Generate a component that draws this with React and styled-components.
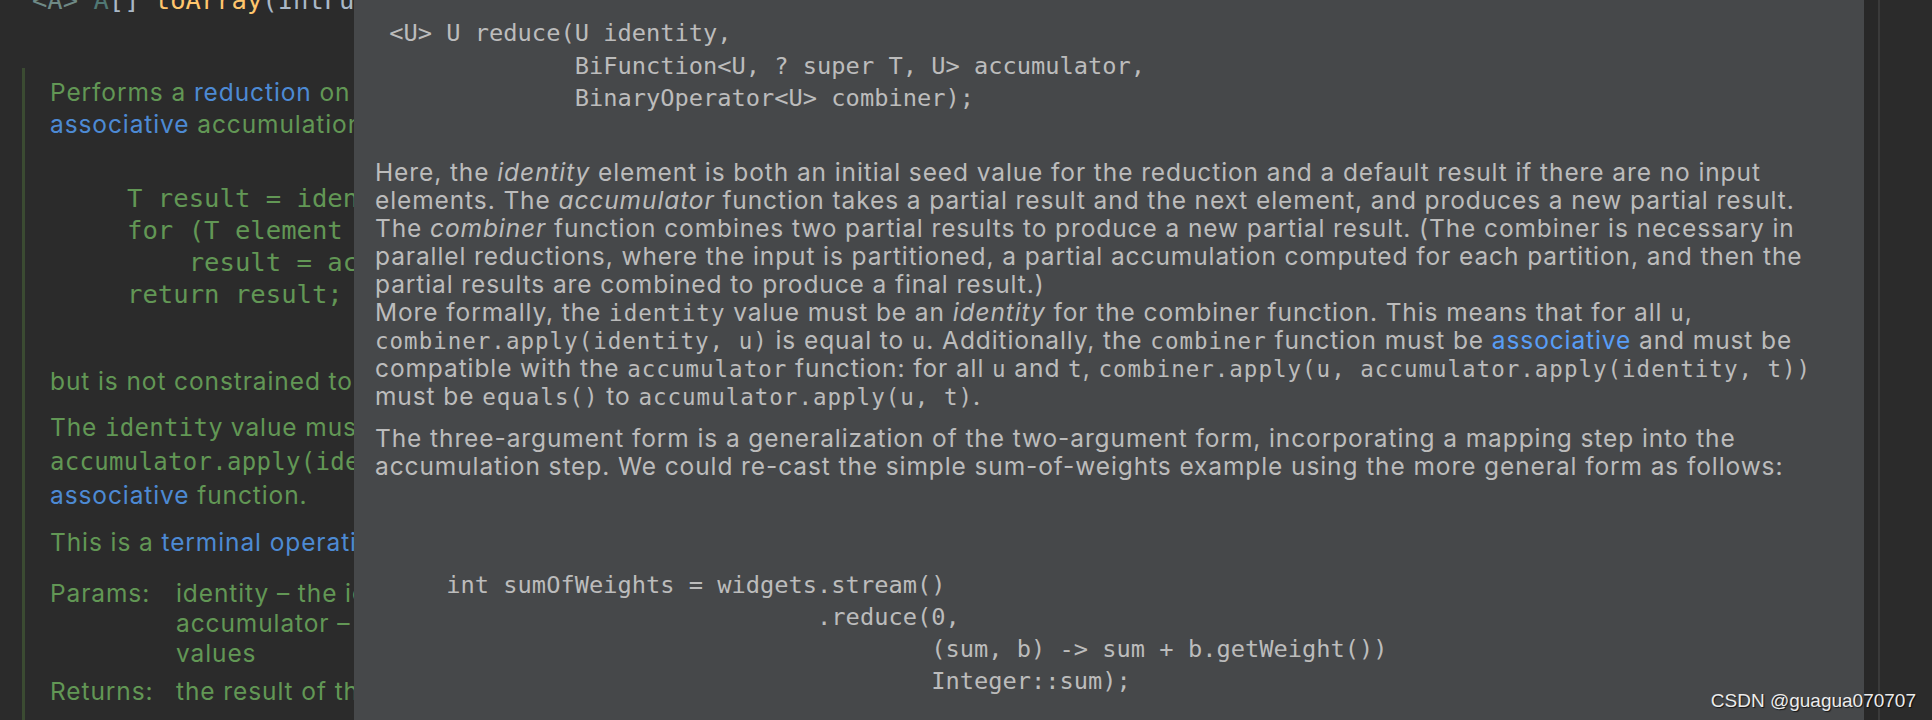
import React from "react";
import styled, { createGlobalStyle } from "styled-components";

const GlobalStyle = createGlobalStyle`
  html, body {
    margin: 0;
    padding: 0;
    background: #2b2b2b;
  }
  body {
    overflow: hidden;
  }
`;

const MONO = `"DejaVu Sans Mono", "Liberation Mono", monospace`;
const SANS = `Inter, "Noto Sans", sans-serif`;

const Screen = styled.div`
  position: relative;
  display: flex;
  width: 1932px;
  height: 720px;
  overflow: hidden;
  background: #2b2b2b;
`;

const EditorArea = styled.div`
  flex: 1;
  min-width: 0;
  display: flex;
  flex-direction: column;
  overflow: hidden;
`;

const ScrollStrip = styled.div`
  width: 14px;
  background: #282828;
`;

const Divider = styled.div`
  width: 2px;
  background: #3a3a3a;
`;

const RightGutter = styled.div`
  width: 52px;
  background: #2b2b2b;
`;

const SourceLine = styled.div`
  margin-top: -16px;
  padding-left: 32px;
  font-family: ${MONO};
  font-size: 25.5px;
  line-height: 32px;
  white-space: pre;
  color: #a9b7c6;
`;

const Tok = styled.span`
  color: ${(p) => p.$c};
`;

const DocBlock = styled.div`
  margin: 52px 0 0 22px;
  padding: 8px 0 0 25px;
  border-left: 3px solid #3b4b32;
  color: #629755;
  font-family: ${SANS};
  font-size: 24.5px;
  letter-spacing: 0.9px;
  line-height: 32px;
  white-space: nowrap;
  flex: 1;
`;

const DocPara = styled.div`
  margin-top: ${(p) => p.$gap || 0}px;
  line-height: ${(p) => p.$lh || 32}px;
`;

const DocPre = styled.div`
  margin-top: ${(p) => p.$gap || 0}px;
  font-family: ${MONO};
  font-size: 25.6px;
  letter-spacing: 0;
  line-height: 32px;
  white-space: pre;
`;

const DocCode = styled.span`
  font-family: ${MONO};
  font-size: 24px;
  letter-spacing: 0.3px;
  line-height: 20px;
`;

const DocLink = styled.span`
  color: #4d8ad4;
`;

const ParamGrid = styled.div`
  margin-top: ${(p) => p.$gap || 0}px;
  display: grid;
  grid-template-columns: 126px auto;
  line-height: ${(p) => p.$lh || 32}px;
`;

const Popup = styled.div`
  position: absolute;
  left: 354px;
  top: 0;
  bottom: 0;
  width: 1510px;
  box-sizing: border-box;
  padding: 17px 0 0 21px;
  background: #46484a;
  color: #bcbcbc;
  overflow: hidden;
`;

const PopupPre = styled.div`
  margin-top: ${(p) => p.$gap || 0}px;
  font-family: ${MONO};
  font-size: 23.7px;
  line-height: ${(p) => p.$lh || 32}px;
  white-space: pre;
`;

const PopupPara = styled.div`
  margin-top: ${(p) => p.$gap || 0}px;
  font-family: ${SANS};
  font-size: 24.5px;
  letter-spacing: 0.9px;
  line-height: 28.1px;
  white-space: nowrap;
`;

const Code = styled.span`
  font-family: ${MONO};
  font-size: 22.5px;
  letter-spacing: 1px;
  line-height: 20px;
`;

const Link = styled.span`
  color: #589df6;
`;

const Watermark = styled.div`
  position: absolute;
  right: 16px;
  bottom: 8px;
  font-family: "Liberation Sans", Arial, sans-serif;
  font-size: 19px;
  line-height: 22px;
  color: #ececec;
  text-shadow: 1px 1px 1px rgba(0, 0, 0, 0.7);
`;

export default function App() {
  return (
    <>
      <GlobalStyle />
      <Screen>
        <EditorArea>
          <SourceLine>
            <Tok $c="#6f8a86">{"<A>"}</Tok>{" "}
            <Tok $c="#507874">A</Tok>
            <Tok $c="#a9b7c6">[]</Tok>{" "}
            <Tok $c="#ffc66d">toArray</Tok>
            <Tok $c="#a9b7c6">(IntFunction&lt;A[]&gt; generator);</Tok>
          </SourceLine>

          <DocBlock>
            <DocPara>
              Performs a <DocLink>reduction</DocLink> on the elements of this stream, using the
              provided identity value and an
              <br />
              <DocLink>associative</DocLink> accumulation function, and returns the reduced value.
              This is equivalent to:
            </DocPara>
            <DocPre $gap={42}>
              {"     T result = identity;\n     for (T element : this stream)\n         result = accumulator.apply(result, element)\n     return result;"}
            </DocPre>
            <DocPara $gap={55}>but is not constrained to execute sequentially.</DocPara>
            <DocPara $gap={13} $lh={34}>
              The <DocCode>identity</DocCode> value must be an identity for the accumulator
              function. This means that for all t,
              <br />
              <DocCode>accumulator.apply(identity, t)</DocCode> is equal to t. The accumulator
              function must be an
              <br />
              <DocLink>associative</DocLink> function.
            </DocPara>
            <DocPara $gap={14}>
              This is a <DocLink>terminal operation</DocLink>.
            </DocPara>
            <ParamGrid $gap={20} $lh={30}>
              <span>Params:</span>
              <span>
                identity – the identity value for the accumulating function
                <br />
                accumulator – an associative, non-interfering, stateless function for combining two
                <br />
                values
              </span>
            </ParamGrid>
            <ParamGrid $gap={7}>
              <span>Returns:</span>
              <span>the result of the reduction</span>
            </ParamGrid>
          </DocBlock>
        </EditorArea>
        <ScrollStrip />
        <Divider />
        <RightGutter />

        <Popup>
          <PopupPre $lh={32.5}>
            {" <U> U reduce(U identity,\n              BiFunction<U, ? super T, U> accumulator,\n              BinaryOperator<U> combiner);"}
          </PopupPre>

          <PopupPara $gap={43}>
            Here, the <i>identity</i> element is both an initial seed value for the reduction and a
            default result if there are no input
            <br />
            elements. The <i>accumulator</i> function takes a partial result and the next element,
            and produces a new partial result.
            <br />
            The <i>combiner</i> function combines two partial results to produce a new partial
            result. (The combiner is necessary in
            <br />
            parallel reductions, where the input is partitioned, a partial accumulation computed for
            each partition, and then the
            <br />
            partial results are combined to produce a final result.)
            <br />
            More formally, the <Code>identity</Code> value must be an <i>identity</i> for the
            combiner function. This means that for all <Code>u</Code>,
            <br />
            <Code>combiner.apply(identity, u)</Code> is equal to <Code>u</Code>. Additionally, the{" "}
            <Code>combiner</Code> function must be <Link>associative</Link> and must be
            <br />
            compatible with the <Code>accumulator</Code> function: for all <Code>u</Code> and{" "}
            <Code>t</Code>, <Code>combiner.apply(u, accumulator.apply(identity, t))</Code>
            <br />
            must be <Code>equals()</Code> to <Code>accumulator.apply(u, t)</Code>.
          </PopupPara>

          <PopupPara $gap={13.5}>
            The three-argument form is a generalization of the two-argument form, incorporating a
            mapping step into the
            <br />
            accumulation step. We could re-cast the simple sum-of-weights example using the more
            general form as follows:
          </PopupPara>

          <PopupPre $gap={89}>
            {"     int sumOfWeights = widgets.stream()\n                               .reduce(0,\n                                       (sum, b) -> sum + b.getWeight())\n                                       Integer::sum);"}
          </PopupPre>
        </Popup>

        <Watermark>CSDN @guagua070707</Watermark>
      </Screen>
    </>
  );
}
